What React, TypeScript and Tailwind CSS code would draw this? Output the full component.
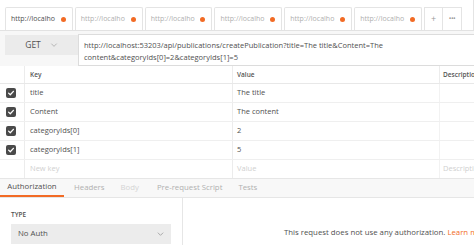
import React from 'react';

const tabs = Array.from({ length: 6 }, (_, i) => ({ id: i, label: 'http://localho', active: i === 0 }));

const params = [
  { key: 'title', value: 'The title' },
  { key: 'Content', value: 'The content' },
  { key: 'categoryIds[0]', value: '2' },
  { key: 'categoryIds[1]', value: '5' },
];

function Check() {
  return (
    <span className="flex h-[10px] w-[10px] items-center justify-center rounded-[2px] bg-[#4a4a4a]">
      <svg viewBox="0 0 10 10" className="h-[8px] w-[8px]">
        <path d="M2 5.2 L4.1 7.2 L8 2.9" fill="none" stroke="#fff" strokeWidth="1.6" strokeLinecap="round" strokeLinejoin="round" />
      </svg>
    </span>
  );
}

export default function App() {
  return (
    <div className="flex h-[245px] w-[474px] flex-col overflow-hidden bg-white font-['Open_Sans',sans-serif] text-[#505050]">
      {/* request tabs */}
      <div className="flex h-[31px] shrink-0 items-end gap-[2px] border-b border-[#e2e2e2] pl-[5px]">
        {tabs.map((t) => (
          <div
            key={t.id}
            className="flex h-[23px] w-[68px] items-center justify-between rounded-t-[2px] border border-b-0 border-[#e4e4e4] bg-white pl-[5px] pr-[6px] text-[7px]"
          >
            <span className={t.active ? 'text-[#505050]' : 'text-[#b0b0b0]'}>{t.label}</span>
            <span className="h-[5px] w-[5px] rounded-full bg-[#f26b25]" />
          </div>
        ))}
        <div className="flex h-[23px] border border-b-0 border-[#e4e4e4] text-[9px] text-[#9a9a9a]">
          <span className="flex w-[18px] items-center justify-center border-r border-[#e4e4e4]">+</span>
          <span className="flex w-[18px] items-center justify-center text-[7px] tracking-[-0.5px]">•••</span>
        </div>
        <div className="ml-[9px] h-full w-px bg-[#e4e4e4]" />
      </div>

      {/* method + url */}
      <div className="flex h-[35px] shrink-0 items-start bg-[#f7f7f7] pl-[5px] pt-[3px]">
        <div className="mt-px flex h-[20px] w-[73px] items-center justify-center gap-[9px] bg-[#ebebeb] text-[8.5px]">
          <span>GET</span>
          <svg viewBox="0 0 10 6" className="h-[4px] w-[8px]">
            <path d="M1 1 L5 5 L9 1" fill="none" stroke="#a8a8a8" strokeWidth="1.2" />
          </svg>
        </div>
        <div className="h-[32px] flex-1 border border-r-0 border-[#dcdcdc] bg-white pl-[5px] pt-[4px] text-[7.5px] leading-[12px]">
          http://localhost:53203/api/publications/createPublication?title=The title&amp;Content=The
          <br />
          content&amp;categoryIds[0]=2&amp;categoryIds[1]=5
        </div>
      </div>

      {/* params table */}
      <div className="flex shrink-0 flex-col text-[7.5px]">
        <div className="flex h-[18px] items-center border-b border-[#e8e8e8] text-[6.5px] font-semibold text-[#555]">
          <div className="h-full w-[25px] border-r border-[#ececec]" />
          <div className="flex h-full w-[208px] items-center border-r border-[#ececec] pl-[5px]">Key</div>
          <div className="flex h-full w-[207px] items-center border-r border-[#ececec] pl-[4px]">Value</div>
          <div className="flex h-full flex-1 items-center overflow-hidden whitespace-nowrap pl-[3px]">Description</div>
        </div>
        {params.map((p) => (
          <div key={p.key} className="flex h-[19px] items-center border-b border-[#efefef]">
            <div className="flex h-full w-[25px] items-center justify-center border-r border-[#ececec] pr-[2px]">
              <Check />
            </div>
            <div className="flex h-full w-[208px] items-center border-r border-[#ececec] pl-[5px]">{p.key}</div>
            <div className="flex h-full w-[207px] items-center border-r border-[#f2f2f2] pl-[4px]">{p.value}</div>
            <div className="h-full flex-1" />
          </div>
        ))}
        <div className="flex h-[18px] items-center text-[#d0d0d0]">
          <div className="h-full w-[25px] border-r border-[#ececec]" />
          <div className="flex h-full w-[208px] items-center border-r border-[#ececec] pl-[5px]">New key</div>
          <div className="flex h-full w-[207px] items-center border-r border-[#f2f2f2] pl-[4px]">Value</div>
          <div className="flex h-full flex-1 items-center overflow-hidden whitespace-nowrap pl-[3px]">Description</div>
        </div>
      </div>

      {/* auth tabs */}
      <div className="flex h-[20px] shrink-0 items-stretch border-y border-[#e6e6e6] bg-[#f8f8f8] text-[7.8px]">
        <div className="flex w-[64px] items-center justify-center border-b-2 border-[#f26b25] text-[#505050]">Authorization</div>
        <div className="flex items-center pl-[10px] text-[#b0b0b0]">Headers</div>
        <div className="flex items-center pl-[16px] text-[#d4d4d4]">Body</div>
        <div className="flex items-center pl-[18px] text-[#b0b0b0]">Pre-request Script</div>
        <div className="flex items-center pl-[16px] text-[#b0b0b0]">Tests</div>
      </div>

      {/* auth body */}
      <div className="flex flex-1">
        <div className="flex w-[183px] flex-col border-r border-[#e6e6e6] pl-[11px] pt-[12px]">
          <span className="text-[6.5px] font-semibold">TYPE</span>
          <div className="mt-[4px] flex h-[20px] w-[160px] items-center justify-between bg-[#ececec] pl-[7px] pr-[7px] text-[7.8px]">
            <span>No Auth</span>
            <svg viewBox="0 0 10 6" className="h-[4px] w-[7px]">
              <path d="M1 1 L5 5 L9 1" fill="none" stroke="#9a9a9a" strokeWidth="1.2" />
            </svg>
          </div>
        </div>
        <div className="flex flex-1 items-end overflow-hidden whitespace-nowrap pb-[6px] pl-[101px] text-[7.8px]">
          This request does not use any authorization.&nbsp;<span className="text-[#f26b25]">Learn more about authorization</span>
        </div>
      </div>
    </div>
  );
}
